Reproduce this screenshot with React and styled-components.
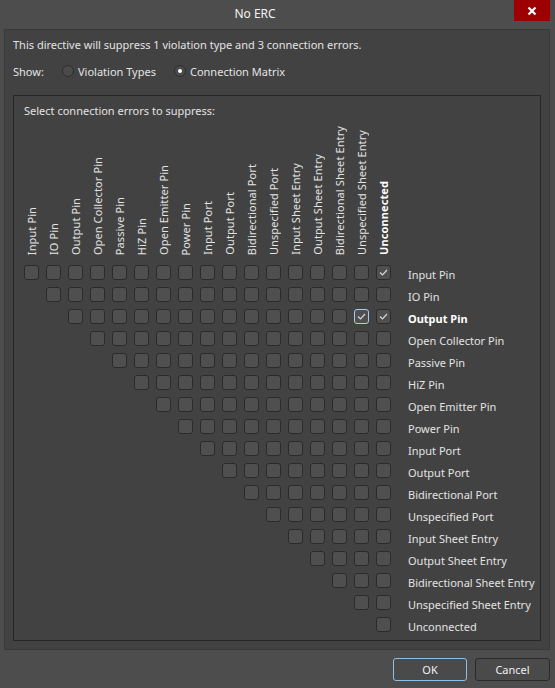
import React from 'react';
import styled, { createGlobalStyle } from 'styled-components';

const GlobalStyle = createGlobalStyle`
  html, body {
    margin: 0;
    padding: 0;
    background: #4d4d4d;
  }
  body {
    font-family: "Noto Sans", "Open Sans", sans-serif;
    font-size: 11px;
    color: #e3e3e3;
  }
  * { box-sizing: border-box; }
`;

const Window = styled.div`
  width: 555px;
  height: 688px;
  display: flex;
  flex-direction: column;
  background: #4d4d4d;
  overflow: hidden;
`;

const TitleBar = styled.div`
  height: 29px;
  display: flex;
  align-items: flex-start;
`;

const Title = styled.div`
  flex: 1;
  text-align: center;
  line-height: 28px;
  font-size: 12px;
  color: #f2f2f2;
  padding-right: 4px;
`;

const CloseButton = styled.div`
  width: 36px;
  height: 21px;
  margin-right: 5px;
  background: #9c0000;
  display: flex;
  align-items: center;
  justify-content: center;
`;

const Body = styled.div`
  height: 621px;
  margin: 0 5px 0 4px;
  border: 1px solid #393939;
  background: #424242;
  display: flex;
  flex-direction: column;
  padding: 7px 8px 8px 8px;
`;

const Line = styled.div`
  line-height: 16px;
  white-space: nowrap;
`;

const ShowRow = styled.div`
  display: flex;
  align-items: center;
  height: 16px;
  margin-top: 10px;
`;

const ShowLabel = styled.span`
  width: 49px;
`;

const RadioOption = styled.label`
  display: flex;
  align-items: center;
  gap: 4px;
  margin-left: ${p => p.$offset}px;
`;

const RadioCircle = styled.span`
  width: 12px;
  height: 12px;
  border-radius: 50%;
  background: #4b4b4b;
  border: 1px solid #2e2e2e;
  display: flex;
  align-items: center;
  justify-content: center;
  &::after {
    content: '';
    width: 4px;
    height: 4px;
    border-radius: 50%;
    background: ${p => (p.$selected ? '#ffffff' : 'transparent')};
  }
`;

const GroupBox = styled.div`
  flex: 1;
  margin-top: 16px;
  border: 1px solid #262626;
  padding: 7px 10px 0 10px;
`;

const Matrix = styled.div`
  display: grid;
  grid-template-columns: repeat(17, 15px) auto;
  grid-auto-rows: 15px;
  column-gap: 7px;
  row-gap: 7px;
`;

const Header = styled.div`
  display: grid;
  grid-template-columns: repeat(17, 15px);
  column-gap: 7px;
  align-items: end;
  margin-top: 7px;
  margin-bottom: 10px;
`;

const ColumnLabel = styled.div`
  justify-self: center;
  writing-mode: vertical-rl;
  transform: rotate(180deg);
  line-height: 15px;
  letter-spacing: 0.1px;
  white-space: nowrap;
  font-weight: ${p => (p.$bold ? 700 : 400)};
  color: ${p => (p.$bold ? '#ffffff' : '#e3e3e3')};
`;

const Empty = styled.span``;

const Box = styled.span`
  width: 15px;
  height: 15px;
  border-radius: 3px;
  background: #4f4f4f;
  border: 1px solid ${p => (p.$focused ? '#a4cdf0' : '#2b2b2b')};
  display: flex;
  align-items: center;
  justify-content: center;
`;

const RowLabel = styled.div`
  margin-left: 10px;
  line-height: 19px;
  white-space: nowrap;
  font-weight: ${p => (p.$bold ? 700 : 400)};
  color: ${p => (p.$bold ? '#ffffff' : '#e3e3e3')};
`;

const Footer = styled.div`
  flex: 1;
  display: flex;
  justify-content: flex-end;
  align-items: flex-start;
  gap: 8px;
  padding: 8px 5px 0 0;
`;

const Button = styled.div`
  width: ${p => p.$width}px;
  height: 23px;
  border-radius: 3px;
  background: #4a4a4a;
  border: 1px solid ${p => (p.$primary ? '#8fbfe6' : '#2a2a2a')};
  display: flex;
  align-items: center;
  justify-content: center;
  color: #f0f0f0;
`;

const types = [
  'Input Pin',
  'IO Pin',
  'Output Pin',
  'Open Collector Pin',
  'Passive Pin',
  'HiZ Pin',
  'Open Emitter Pin',
  'Power Pin',
  'Input Port',
  'Output Port',
  'Bidirectional Port',
  'Unspecified Port',
  'Input Sheet Entry',
  'Output Sheet Entry',
  'Bidirectional Sheet Entry',
  'Unspecified Sheet Entry',
  'Unconnected',
];

const checked = { '0-16': true, '2-15': true, '2-16': true };
const focusedCell = '2-15';
const boldRow = 2;
const boldCol = 16;

const Check = () => (
  <svg width="11" height="11" viewBox="0 0 11 11">
    <polyline points="2,5.5 4.5,8 9,3" fill="none" stroke="#d6d6d6" strokeWidth="1.2" />
  </svg>
);

const Cross = () => (
  <svg width="10" height="10" viewBox="0 0 10 10">
    <path d="M1.5 1.5 L8.5 8.5 M8.5 1.5 L1.5 8.5" stroke="#ffffff" strokeWidth="2.2" />
  </svg>
);

export default function App() {
  return (
    <>
      <GlobalStyle />
      <Window>
        <TitleBar>
          <Title>No ERC</Title>
          <CloseButton><Cross /></CloseButton>
        </TitleBar>
        <Body>
          <Line>This directive will suppress 1 violation type and 3 connection errors.</Line>
          <ShowRow>
            <ShowLabel>Show:</ShowLabel>
            <RadioOption $offset={0}>
              <RadioCircle />
              Violation Types
            </RadioOption>
            <RadioOption $offset={18}>
              <RadioCircle $selected />
              Connection Matrix
            </RadioOption>
          </ShowRow>
          <GroupBox>
            <Line>Select connection errors to suppress:</Line>
            <Header>
              {types.map((t, j) => (
                <ColumnLabel key={t} $bold={j === boldCol}>{t}</ColumnLabel>
              ))}
            </Header>
            <Matrix>
              {types.map((t, i) => (
                <React.Fragment key={t}>
                  {types.map((_, j) => {
                    const id = `${i}-${j}`;
                    if (j < i) return <Empty key={id} />;
                    return (
                      <Box key={id} $focused={id === focusedCell}>
                        {checked[id] && <Check />}
                      </Box>
                    );
                  })}
                  <RowLabel $bold={i === boldRow}>{t}</RowLabel>
                </React.Fragment>
              ))}
            </Matrix>
          </GroupBox>
        </Body>
        <Footer>
          <Button $primary $width={74}>OK</Button>
          <Button $width={75}>Cancel</Button>
        </Footer>
      </Window>
    </>
  );
}
